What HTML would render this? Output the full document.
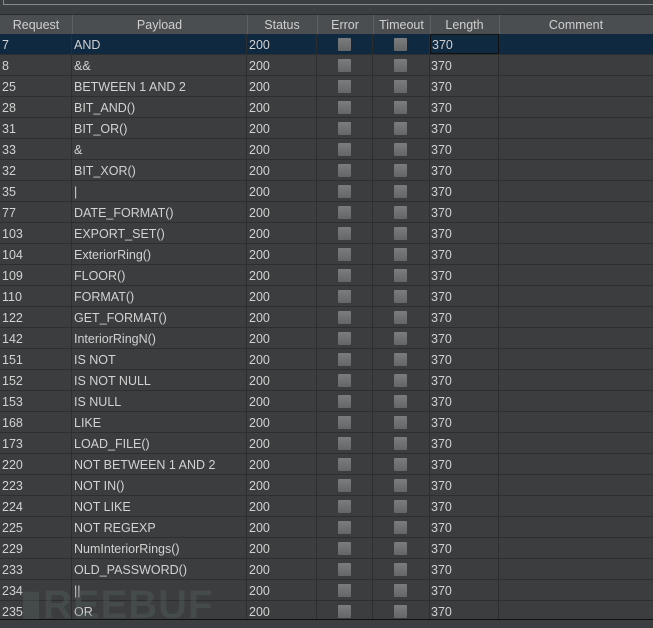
<!DOCTYPE html>
<html><head><style>
body{margin:0;width:653px;height:627px;background:#3c3f41;overflow:hidden;font-family:"Liberation Sans",Arial,sans-serif;font-size:12.5px;color:#d2d2d2;position:relative}
.top{position:absolute;left:0;top:0;width:653px;height:14px;background:#3c3f41}
.topbox{position:absolute;left:3px;top:-4px;width:660px;height:8px;border:1px solid #8a8a8a;border-top:none}
.hdr{position:absolute;left:0;top:14px;width:653px;height:20px;background:#4b4e50;border-top:1px solid #2a2a2a}
.hdr div{position:absolute;top:0;height:20px;line-height:20px;text-align:center;color:#cfcfcf;border-right:1px solid #5e6163}
.rows{position:absolute;left:0;top:34px;width:653px;height:585px;overflow:hidden;background:#3b3d3f}
.r{position:relative;height:21px;border-bottom:1px solid #2c2e30;box-sizing:border-box}
.r.sel{background:#0e2940}
.r div{position:absolute;top:0;height:20px;line-height:20px;padding-top:1px;border-right:1px solid #2c2e30;box-sizing:border-box;padding-left:3px}
.cb{position:absolute;top:4px;width:13px;height:13px;background:linear-gradient(#7a7c7e,#646668);border-radius:1px}
.bot{position:absolute;left:0;top:619px;width:653px;height:8px;background:#3c3f41;border-top:1px solid #111}
.c0{left:0;width:72px}.c1{left:72px;width:175px}.c2{left:247px;width:70px}.c3{left:317px;width:56px}.c4{left:373px;width:57px}.c5{left:430px;width:69px}.c6{left:499px;width:154px}
.wm{position:absolute;left:20px;top:582px;font:bold 40px "Liberation Sans",sans-serif;color:rgba(90,100,95,0.35);letter-spacing:1px}
</style></head><body>
<div class="top"><div class="topbox"></div></div>
<div class="hdr">
<div class="c0">Request</div><div class="c1">Payload</div><div class="c2">Status</div><div class="c3">Error</div><div class="c4">Timeout</div><div class="c5">Length</div><div class="c6" style="border-right:none">Comment</div>
</div>
<div class="rows" id="rows"></div>
<div class="wm">▮REEBUF</div>
<div class="bot"></div>
<script>
var d=[[7,"AND"],[8,"&amp;&amp;"],[25,"BETWEEN 1 AND 2"],[28,"BIT_AND()"],[31,"BIT_OR()"],[33,"&amp;"],[32,"BIT_XOR()"],[35,"|"],[77,"DATE_FORMAT()"],[103,"EXPORT_SET()"],[104,"ExteriorRing()"],[109,"FLOOR()"],[110,"FORMAT()"],[122,"GET_FORMAT()"],[142,"InteriorRingN()"],[151,"IS NOT"],[152,"IS NOT NULL"],[153,"IS NULL"],[168,"LIKE"],[173,"LOAD_FILE()"],[220,"NOT BETWEEN 1 AND 2"],[223,"NOT IN()"],[224,"NOT LIKE"],[225,"NOT REGEXP"],[229,"NumInteriorRings()"],[233,"OLD_PASSWORD()"],[234,"||"],[235,"OR"]];
var h="";
d.forEach(function(x,i){
h+='<div class="r'+(i==0?' sel':'')+'"><div class="c0" style="padding-left:2px">'+x[0]+'</div><div class="c1" style="padding-left:2px">'+x[1]+'</div><div class="c2" style="padding-left:2px">200</div><div class="c3"><span class="cb" style="left:21px"></span></div><div class="c4"><span class="cb" style="left:21px"></span></div><div class="c5" style="padding-left:1px'+(i==0?';border:1px solid #111;line-height:18px':'')+'">370</div><div class="c6" style="border-right:none"></div></div>';
});
document.getElementById("rows").innerHTML=h;
</script>
</body></html>
